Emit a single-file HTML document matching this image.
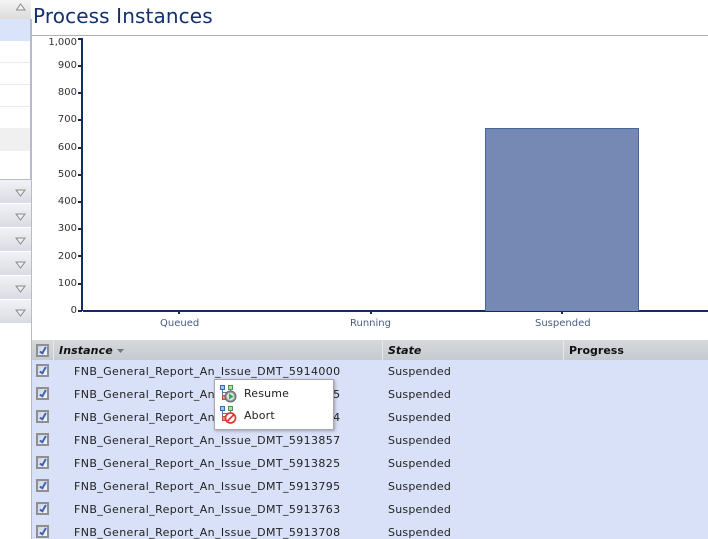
<!DOCTYPE html>
<html><head><meta charset="utf-8"><style>
html,body{margin:0;padding:0;width:708px;height:539px;overflow:hidden;background:#fff}
body{position:relative;font-family:"DejaVu Sans",sans-serif;font-size:11px;color:#222}
.a{position:absolute}
.t{position:absolute;white-space:nowrap;line-height:14px}
.n{letter-spacing:.385px}
.s{letter-spacing:.22px}
.m{letter-spacing:.15px}
.r{position:absolute;left:32px;width:676px;height:23px;background:#d9e1f8}
.y{position:absolute;right:631px;font-size:10px;color:#333;line-height:12px}
.tk{position:absolute;left:78px;width:4px;height:2px;background:#132a66}
.acc{position:absolute;left:0;width:31px;height:24px;background:linear-gradient(#f1f2f5,#d9dce3);box-sizing:border-box;border-bottom:1px solid #fff}
.cb{position:absolute;left:36px;width:9px;height:9px;border:2px solid #8f8f8f;background:linear-gradient(135deg,#ccd2e2,#f4f6fb)}
.cb:after{content:"";position:absolute;left:3px;top:0;width:2px;height:6px;border:solid #3f63b8;border-width:0 2px 2px 0;transform:rotate(30deg)}
.xl{position:absolute;top:318px;font-size:10px;color:#4a5a84;line-height:12px;white-space:nowrap}
.xt{position:absolute;top:311px;width:2px;height:3px;background:#132a66}
</style></head><body>
<!-- left panel -->
<div class="a" style="left:0;top:0;width:31px;height:19px;background:linear-gradient(#f4f4f4,#dcdcdc)"></div>
<svg class="a" style="left:16px;top:3px" width="10" height="8"><path d="M0.5 7L4.5 1L9 7Z" fill="#f4f4f4" stroke="#8a8a8a"/></svg>
<div class="a" style="left:0;top:19px;width:30px;height:22px;background:#d9e3f9"></div>
<div class="a" style="left:0;top:62px;width:30px;height:1px;background:#eaeaea"></div>
<div class="a" style="left:0;top:84px;width:30px;height:1px;background:#eaeaea"></div>
<div class="a" style="left:0;top:106px;width:30px;height:1px;background:#eaeaea"></div>
<div class="a" style="left:0;top:128px;width:30px;height:23px;background:#f0f0f0"></div>
<div class="a" style="left:30px;top:19px;width:1px;height:160px;background:#b4bccb"></div>
<div class="a" style="left:0;top:179px;width:31px;height:1px;background:#b4bccb"></div>
<div class="acc" style="top:180px"></div><div class="acc" style="top:204px"></div><div class="acc" style="top:228px"></div><div class="acc" style="top:252px"></div><div class="acc" style="top:276px"></div><div class="acc" style="top:300px"></div>
<svg class="a" style="left:15px;top:188px" width="12" height="140" fill="#eef0f3" stroke="#8a8a8a">
<path d="M1 2H10L5.5 8Z"/><path d="M1 26H10L5.5 32Z"/><path d="M1 50H10L5.5 56Z"/><path d="M1 74H10L5.5 80Z"/><path d="M1 98H10L5.5 104Z"/><path d="M1 122H10L5.5 128Z"/></svg>
<div class="a" style="left:31px;top:19px;width:1px;height:520px;background:#b4bccb"></div>
<!-- title -->
<div class="t" style="left:33px;top:4px;font-size:20px;line-height:24px;color:#14306e;letter-spacing:.12px">Process Instances</div>
<div class="a" style="left:32px;top:35px;width:676px;height:1px;background:#b0b0b0"></div>
<!-- chart -->
<div class="a" style="left:81px;top:38px;width:2px;height:273px;background:#132a66"></div>
<div class="a" style="left:83px;top:310px;width:625px;height:2px;background:#132a66"></div>
<div class="tk" style="top:38px"></div><div class="tk" style="top:65px"></div><div class="tk" style="top:92px"></div><div class="tk" style="top:119px"></div><div class="tk" style="top:147px"></div><div class="tk" style="top:174px"></div><div class="tk" style="top:201px"></div><div class="tk" style="top:228px"></div><div class="tk" style="top:255px"></div><div class="tk" style="top:283px"></div><div class="tk" style="top:310px"></div>
<div class="y" style="top:37px">1,000</div><div class="y" style="top:60px">900</div><div class="y" style="top:87px">800</div><div class="y" style="top:114px">700</div><div class="y" style="top:142px">600</div><div class="y" style="top:169px">500</div><div class="y" style="top:196px">400</div><div class="y" style="top:223px">300</div><div class="y" style="top:251px">200</div><div class="y" style="top:278px">100</div><div class="y" style="top:305px">0</div>
<div class="a" style="left:485px;top:128px;width:152px;height:182px;background:#7589b4;border:solid #4a6696;border-width:1px 1px 0 1px"></div>
<div class="xt" style="left:178px"></div><div class="xt" style="left:370px"></div><div class="xt" style="left:561px"></div>
<div class="xl" style="left:160px">Queued</div><div class="xl" style="left:350px">Running</div><div class="xl" style="left:535px">Suspended</div>
<!-- table header -->
<div class="a" style="left:32px;top:340px;width:676px;height:20px;background:linear-gradient(#d6d8dc,#c6cad0)"></div>
<div class="a" style="left:53px;top:340px;width:1px;height:20px;background:#e8e8e8"></div>
<div class="a" style="left:382px;top:340px;width:1px;height:20px;background:#e8e8e8"></div>
<div class="a" style="left:563px;top:340px;width:1px;height:20px;background:#e8e8e8"></div>
<div class="cb" style="top:344px"></div>
<div class="t" style="left:59px;top:344px;font-weight:bold;font-style:italic;color:#111;letter-spacing:.1px">Instance</div>
<svg class="a" style="left:117px;top:349px" width="8" height="5"><path d="M0 0H7L3.5 4Z" fill="#777"/></svg>
<div class="t" style="left:388px;top:344px;font-weight:bold;font-style:italic;color:#111">State</div>
<div class="t" style="left:569px;top:344px;font-weight:bold;color:#111">Progress</div>
<!-- rows -->
<div class="r" style="top:360px;height:179px"></div>
<div class="cb" style="top:364px"></div><div class="t n" style="left:74px;top:365px">FNB_General_Report_An_Issue_DMT_5914000</div><div class="t s" style="left:388px;top:365px">Suspended</div>
<div class="cb" style="top:387px"></div><div class="t n" style="left:74px;top:388px">FNB_General_Report_An_Issue_DMT_5913985</div><div class="t s" style="left:388px;top:388px">Suspended</div>
<div class="cb" style="top:410px"></div><div class="t n" style="left:74px;top:411px">FNB_General_Report_An_Issue_DMT_5913934</div><div class="t s" style="left:388px;top:411px">Suspended</div>
<div class="cb" style="top:433px"></div><div class="t n" style="left:74px;top:434px">FNB_General_Report_An_Issue_DMT_5913857</div><div class="t s" style="left:388px;top:434px">Suspended</div>
<div class="cb" style="top:456px"></div><div class="t n" style="left:74px;top:457px">FNB_General_Report_An_Issue_DMT_5913825</div><div class="t s" style="left:388px;top:457px">Suspended</div>
<div class="cb" style="top:479px"></div><div class="t n" style="left:74px;top:480px">FNB_General_Report_An_Issue_DMT_5913795</div><div class="t s" style="left:388px;top:480px">Suspended</div>
<div class="cb" style="top:502px"></div><div class="t n" style="left:74px;top:503px">FNB_General_Report_An_Issue_DMT_5913763</div><div class="t s" style="left:388px;top:503px">Suspended</div>
<div class="cb" style="top:525px"></div><div class="t n" style="left:74px;top:526px">FNB_General_Report_An_Issue_DMT_5913708</div><div class="t s" style="left:388px;top:526px">Suspended</div>
<!-- menu -->
<div class="a" style="left:214px;top:379px;width:118px;height:49px;background:#fff;border:1px solid #a8a8a8;box-shadow:1px 1px 3px rgba(0,0,0,.3)"></div>
<svg class="a" style="left:220px;top:384px" width="18" height="19"><rect x="0.5" y="1.5" width="4" height="4" fill="#9cc4ee" stroke="#3a6ab0"/><rect x="8.5" y="1.5" width="4" height="4" fill="#a8e0a8" stroke="#4a9a4a"/><rect x="2.5" y="11.5" width="4" height="4" fill="#f09080" stroke="#c05040"/><path d="M2.5 6V11M10.5 6V8.5H3" fill="none" stroke="#5a7aa8"/><circle cx="10.5" cy="12.5" r="5.5" fill="#8f9f96" stroke="#667"/><circle cx="10.5" cy="12.5" r="3.7" fill="#d8e8d8"/><path d="M9 9.5V15.5L13.5 12.5Z" fill="#30a860"/></svg>
<svg class="a" style="left:220px;top:405px" width="18" height="20"><rect x="0.5" y="1.5" width="4" height="4" fill="#9cc4ee" stroke="#3a6ab0"/><rect x="8.5" y="1.5" width="4" height="4" fill="#a8e0a8" stroke="#4a9a4a"/><rect x="2.5" y="11.5" width="4" height="4" fill="#f09080" stroke="#c05040"/><path d="M2.5 6V11M10.5 6V8.5H3" fill="none" stroke="#5a7aa8"/><circle cx="10.5" cy="13" r="5" fill="#fff" stroke="#e03a2c" stroke-width="1.7"/><path d="M7 16.5L14 9.5" stroke="#e03a2c" stroke-width="1.8"/></svg>
<div class="t m" style="left:244px;top:387px">Resume</div>
<div class="t m" style="left:244px;top:409px">Abort</div>
</body></html>
